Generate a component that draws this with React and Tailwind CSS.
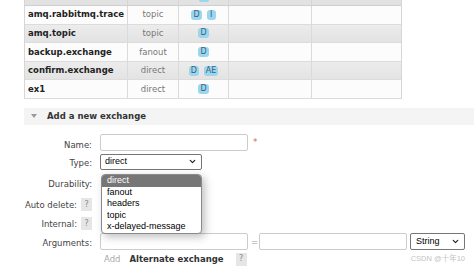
import { ChevronDown } from "lucide-react";

const rows = [
  { name: "amq.rabbitmq.trace", type: "topic", tags: ["D", "I"], shade: false },
  { name: "amq.topic", type: "topic", tags: ["D"], shade: true },
  { name: "backup.exchange", type: "fanout", tags: ["D"], shade: false },
  { name: "confirm.exchange", type: "direct", tags: ["D", "AE"], shade: true },
  { name: "ex1", type: "direct", tags: ["D"], shade: false },
];

const options = ["direct", "fanout", "headers", "topic", "x-delayed-message"];

const cols = "grid grid-cols-[103px_51px_50px_83px_91px]";
const verdana = "font-['DejaVu_Sans',Verdana,sans-serif]";
const arial = "font-['Liberation_Sans',Arial,sans-serif]";

function Badge({ children }) {
  return (
    <span className="h-[10px] min-w-[9px] px-[2px] rounded-[3px] bg-[#9ad6ee] text-[#3d6180] text-[8px] leading-[10px] text-center">
      {children}
    </span>
  );
}

function Help() {
  return (
    <span className="inline-flex items-center justify-center w-[11px] h-[13px] bg-[#e6e6e6] text-[#8a8a8a] text-[8px] ml-[4px]">
      ?
    </span>
  );
}

function Chevron() {
  return <ChevronDown size={9} strokeWidth={3.2} className="text-[#222]" />;
}

export default function App() {
  return (
    <div className={`relative w-[474px] h-[268px] overflow-hidden bg-white ${verdana} text-[8.5px] text-[#444]`}>
      {/* Exchanges table */}
      <div className="ml-[24px] w-[378px] border-l border-r border-[#d6d6d6]">
        <div className={`${cols} h-[6px] overflow-hidden bg-[#e2e2e2] border-b border-[#cfcfcf]`}>
          <div className="border-r border-[#d6d6d6]" />
          <div className="border-r border-[#d6d6d6]" />
          <div className="border-r border-[#d6d6d6] flex justify-center">
            <div className="w-[10px] h-[2px] rounded-b-[3px] bg-[#9ad6ee]" />
          </div>
          <div className="border-r border-[#d6d6d6]" />
          <div />
        </div>
        {rows.map((r) => (
          <div
            key={r.name}
            className={`${cols} h-[18.6px] border-b border-[#dcdcdc] ${
              r.shade ? "bg-gradient-to-b from-[#ececec] to-[#e3e3e3]" : "bg-[#fcfcfc]"
            }`}
          >
            <div className="border-r border-[#dadada] flex items-center pl-[3px] font-bold text-[#222]">
              {r.name}
            </div>
            <div className="border-r border-[#dadada] flex items-center justify-center text-[#777]">
              {r.type}
            </div>
            <div className="border-r border-[#dadada] flex items-center justify-center gap-[5px]">
              {r.tags.map((t) => (
                <Badge key={t}>{t}</Badge>
              ))}
            </div>
            <div className="border-r border-[#dadada]" />
            <div />
          </div>
        ))}
      </div>

      {/* Add a new exchange */}
      <div className="mt-[9px] ml-[24px] h-[17px] bg-[#f4f4f4] flex items-center">
        <svg width="6" height="4" viewBox="0 0 6 4" className="ml-[7px] mr-[10px]">
          <path d="M0 0H6L3 4Z" fill="#9a9a9a" />
        </svg>
        <span className="font-bold text-[#333]">Add a new exchange</span>
      </div>

      <div className="mt-[9px] flex flex-col">
        <div className="flex items-center h-[17px]">
          <div className="w-[92px] text-right pt-[5px]">Name:</div>
          <div className="ml-[8px] w-[148px] h-[17px] border border-[#cccccc] rounded-[2px] bg-white" />
          <span className="ml-[5px] text-[#e06060] text-[9px] leading-none">*</span>
        </div>
        <div className="flex items-center h-[16px] mt-[3px]">
          <div className="w-[92px] text-right pt-[2px]">Type:</div>
          <div className={`ml-[8px] w-[102px] h-[16px] border border-[#767676] rounded-[2px] bg-white flex items-center justify-between pl-[4px] pr-[4px] ${arial} text-[9px] text-black`}>
            <span>direct</span>
            <Chevron />
          </div>
        </div>
        <div className="flex items-center h-[20px] mt-[4px]">
          <div className="w-[92px] text-right">Durability:</div>
        </div>
        <div className="flex items-center h-[20px] mt-[1px]">
          <div className="w-[92px] flex justify-end items-center">
            Auto delete:
            <Help />
          </div>
        </div>
        <div className="flex items-center h-[18px]">
          <div className="w-[92px] flex justify-end items-center">
            Internal:
            <Help />
          </div>
        </div>
        <div className="flex items-center h-[18px]">
          <div className="w-[92px] text-right pt-[3px]">Arguments:</div>
          <div className="ml-[8px] w-[148px] h-[17px] border border-[#cccccc] rounded-[2px] bg-white" />
          <span className="ml-[3px] w-[8px] text-[#999]">=</span>
          <div className="w-[148px] h-[17px] border border-[#cccccc] rounded-[2px] bg-white" />
          <div className={`ml-[3px] w-[55px] h-[17px] border border-[#767676] rounded-[2px] bg-white flex items-center justify-between pl-[5px] pr-[4px] ${arial} text-[9px] text-black`}>
            <span>String</span>
            <Chevron />
          </div>
        </div>
        <div className="flex items-center h-[16px]">
          <span className="ml-[104px] text-[#aaaaaa]">Add</span>
          <span className="ml-[9px] font-bold text-[#333]">Alternate exchange</span>
          <span className="ml-[8px]">
            <Help />
          </span>
          <span className="ml-auto mr-[9px] font-['Liberation_Sans','Noto_Sans_CJK_SC',sans-serif] text-[7.5px] text-[#c4c4c4]">
            CSDN @十年10
          </span>
        </div>
      </div>

      {/* Open type dropdown */}
      <div className={`absolute left-[101px] top-[174px] w-[101px] border border-[#8a8a8a] rounded-[4px] bg-white shadow-[3px_3px_8px_rgba(0,0,0,0.25)] overflow-hidden ${arial} text-[9px] text-black`}>
        {options.map((o, i) => (
          <div
            key={o}
            className={`h-[11.5px] leading-[11.5px] pl-[5px] ${i === 0 ? "bg-[#767676] text-white" : ""}`}
          >
            {o}
          </div>
        ))}
      </div>
    </div>
  );
}
